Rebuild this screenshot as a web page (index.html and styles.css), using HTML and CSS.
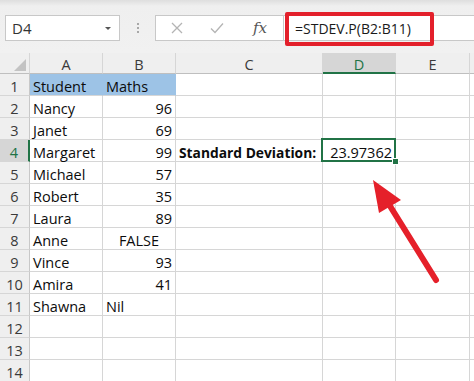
FILE: index.html
```html
<!DOCTYPE html>
<html lang="en">
<head>
    <meta charset="UTF-8">
    <meta name="viewport" content="width=device-width, initial-scale=1.0">
    <title>STDEV.P</title>
    <link rel="stylesheet" href="styles.css">
</head>
<body>
    <div class="toolbar">
        <div class="namebox">
            <span>D4</span>
            <span class="caret"></span>
        </div>
        <div class="dots"><i></i><i></i><i></i></div>
        <div class="fxbox">
            <svg class="ico" width="14" height="14" viewBox="0 0 14 14"><path d="M2 2 L12 12 M12 2 L2 12" stroke="#b4b4b4" stroke-width="1.3" fill="none"/></svg>
            <svg class="ico" width="16" height="14" viewBox="0 0 16 14"><path d="M2 7.5 L6 11.5 L14 2.5" stroke="#b4b4b4" stroke-width="1.3" fill="none"/></svg>
            <span class="fx">fx</span>
        </div>
        <div class="formula">
            <span class="formula-text">=STDEV.P(B2:B11)</span>
            <div class="highlight"></div>
        </div>
    </div>

    <div class="sheet">
        <div class="h corner"><span class="tri"></span></div>
        <div class="h">A</div><div class="h">B</div><div class="h">C</div><div class="h h-sel">D</div><div class="h">E</div><div class="h"></div>

        <div class="rh">1</div><div class="c blue">Student</div><div class="c blue">Maths</div><div class="c"></div><div class="c"></div><div class="c"></div><div class="c"></div>
        <div class="rh">2</div><div class="c">Nancy</div><div class="c num">96</div><div class="c"></div><div class="c"></div><div class="c"></div><div class="c"></div>
        <div class="rh">3</div><div class="c">Janet</div><div class="c num">69</div><div class="c"></div><div class="c"></div><div class="c"></div><div class="c"></div>
        <div class="rh rh-sel">4</div><div class="c">Margaret</div><div class="c num">99</div><div class="c bold">Standard Deviation:</div><div class="c num sel">23.97362</div><div class="c"></div><div class="c"></div>
        <div class="rh">5</div><div class="c">Michael</div><div class="c num">57</div><div class="c"></div><div class="c"></div><div class="c"></div><div class="c"></div>
        <div class="rh">6</div><div class="c">Robert</div><div class="c num">35</div><div class="c"></div><div class="c"></div><div class="c"></div><div class="c"></div>
        <div class="rh">7</div><div class="c">Laura</div><div class="c num">89</div><div class="c"></div><div class="c"></div><div class="c"></div><div class="c"></div>
        <div class="rh">8</div><div class="c">Anne</div><div class="c ctr">FALSE</div><div class="c"></div><div class="c"></div><div class="c"></div><div class="c"></div>
        <div class="rh">9</div><div class="c">Vince</div><div class="c num">93</div><div class="c"></div><div class="c"></div><div class="c"></div><div class="c"></div>
        <div class="rh">10</div><div class="c">Amira</div><div class="c num">41</div><div class="c"></div><div class="c"></div><div class="c"></div><div class="c"></div>
        <div class="rh">11</div><div class="c">Shawna</div><div class="c">Nil</div><div class="c"></div><div class="c"></div><div class="c"></div><div class="c"></div>
        <div class="rh">12</div><div class="c"></div><div class="c"></div><div class="c"></div><div class="c"></div><div class="c"></div><div class="c"></div>
        <div class="rh">13</div><div class="c"></div><div class="c"></div><div class="c"></div><div class="c"></div><div class="c"></div><div class="c"></div>
        <div class="rh">14</div><div class="c"></div><div class="c"></div><div class="c"></div><div class="c"></div><div class="c"></div><div class="c"></div>
    </div>

    <!-- annotation arrow pointing at D4 -->
    <svg class="arrow" width="474" height="381" viewBox="0 0 474 381">
        <line x1="390" y1="206" x2="436" y2="280" stroke="#e5202a" stroke-width="6" stroke-linecap="round"/>
        <polygon points="373,180 379,213 401,200" fill="#e5202a"/>
    </svg>
</body>
</html>
```

FILE: styles.css
```css
body {
    margin: 0;
    width: 474px;
    height: 381px;
    overflow: hidden;
    position: relative;
    font-family: "Open Sans", "Noto Sans", sans-serif;
    font-size: 14.5px;
    color: #0c0c0c;
    background: #fff;
}
.toolbar {
    height: 53px;
    box-sizing: border-box;
    padding-top: 15px;
    display: flex;
    align-items: flex-start;
    background: linear-gradient(to bottom, #dedede 0, #efefef 6px, #f1f1f1 100%);
}
.namebox {
    margin-left: 5px;
    width: 115px;
    height: 26px;
    box-sizing: border-box;
    border: 1px solid #c8c8c8;
    background: #fff;
    display: flex;
    align-items: center;
    justify-content: space-between;
    padding: 0 8px 0 6px;
    font-size: 15px;
    color: #333;
}
.caret {
    width: 0;
    height: 0;
    border-left: 3px solid transparent;
    border-right: 3px solid transparent;
    border-top: 3px solid #555;
}
.dots {
    width: 35px;
    height: 26px;
    display: flex;
    flex-direction: column;
    align-items: center;
    justify-content: center;
    gap: 2px;
}
.dots i {
    width: 2px;
    height: 2px;
    background: #a8a8a8;
}
.fxbox {
    width: 128px;
    height: 26px;
    box-sizing: border-box;
    border: 1px solid #c8c8c8;
    border-right: none;
    background: #fff;
    display: flex;
    align-items: center;
    padding-left: 14px;
    gap: 25px;
}
.fx {
    font-family: "DejaVu Serif", "Liberation Serif", serif;
    font-style: italic;
    font-size: 15px;
    color: #555;
    margin-left: 3px;
}
.formula {
    flex: 1;
    height: 26px;
    box-sizing: border-box;
    border: 1px solid #c8c8c8;
    border-right: none;
    background: #fff;
    position: relative;
    display: flex;
    align-items: center;
    padding-left: 11px;
}
.formula-text {
    font-size: 14px;
    color: #1a1a1a;
}
.highlight {
    position: absolute;
    left: 1px;
    top: -4px;
    width: 149px;
    height: 34px;
    box-sizing: border-box;
    border: 4px solid #e3202b;
    border-radius: 2px;
}
.sheet {
    display: grid;
    grid-template-columns: 30px 73px 73px 147px 73px 74px 1fr;
    grid-template-rows: 21px repeat(14, 22px);
}
.sheet > div {
    box-sizing: border-box;
    border-right: 1px solid #d6d6d6;
    border-bottom: 1px solid #d6d6d6;
    display: flex;
    align-items: center;
    padding-top: 3px;
    white-space: nowrap;
}
.h {
    background: #efefef;
    justify-content: center;
    color: #3a3a3a;
    font-size: 14.5px;
    border-bottom-color: #bfbfbf !important;
}
.h-sel {
    background: #d6d6d6;
    color: #217346;
    border-bottom: 2px solid #217346 !important;
}
.corner {
    position: relative;
}
.tri {
    position: absolute;
    right: 3px;
    bottom: 2px;
    width: 0;
    height: 0;
    border-left: 12px solid transparent;
    border-bottom: 12px solid #c3c3c3;
}
.rh {
    background: #efefef;
    justify-content: center;
    color: #3a3a3a;
    font-size: 14.5px;
    border-right-color: #c8c8c8 !important;
}
.rh-sel {
    background: #d6d6d6;
    color: #217346;
    border-right: 2px solid #217346 !important;
}
.c {
    padding-left: 3px;
    padding-right: 3px;
}
.blue {
    background: #9dc3e6;
    border-color: #9dc3e6 !important;
    border-bottom-color: #d6d6d6 !important;
}
.num {
    justify-content: flex-end;
}
.ctr {
    justify-content: center;
}
.bold {
    font-weight: 700;
    font-size: 13.8px;
}
.sel {
    position: relative;
}
.sel::after {
    content: "";
    position: absolute;
    left: -2px;
    top: -2px;
    right: -1px;
    bottom: -1px;
    border: 2px solid #217346;
}
.sel::before {
    content: "";
    position: absolute;
    right: -4px;
    bottom: -4px;
    width: 5px;
    height: 5px;
    background: #217346;
    border: 1px solid #fff;
    z-index: 1;
}
.arrow {
    position: absolute;
    left: 0;
    top: 0;
    pointer-events: none;
}
```
